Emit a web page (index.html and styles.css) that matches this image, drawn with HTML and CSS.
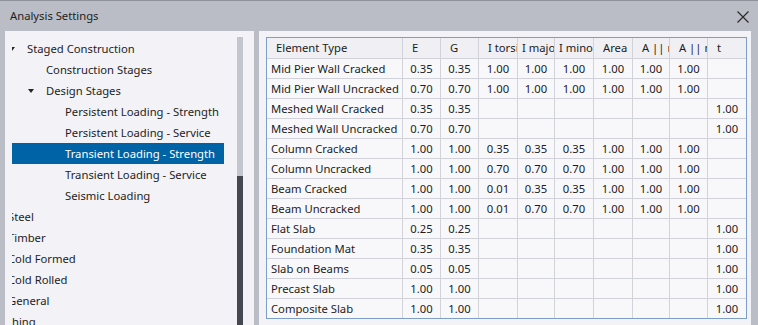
FILE: index.html
```html
<!DOCTYPE html>
<html>
<head>
<meta charset="utf-8">
<link rel="stylesheet" href="styles.css">
</head>
<body>
<div class="window">
  <div class="titlebar">
    <span class="title">Analysis Settings</span>
    <svg class="close" width="12" height="12" viewBox="0 0 12 12"><path d="M0.5 0.5 L11.5 11.5 M11.5 0.5 L0.5 11.5" stroke="#2b2b2b" stroke-width="1.2" fill="none"/></svg>
  </div>
  <div class="content">
    <div class="left">
      <div class="tree-viewport">
        <div class="tree">
          <div class="node l1"><svg class="arrow" width="6" height="4" viewBox="0 0 6 4"><path d="M0 0 H6 L3 4 Z" fill="#262626"/></svg>Staged Construction</div>
          <div class="node l2">Construction Stages</div>
          <div class="node l2"><svg class="arrow" width="6" height="4" viewBox="0 0 6 4"><path d="M0 0 H6 L3 4 Z" fill="#262626"/></svg>Design Stages</div>
          <div class="node l3">Persistent Loading - Strength</div>
          <div class="node l3">Persistent Loading - Service</div>
          <div class="node l3 selected">Transient Loading - Strength</div>
          <div class="node l3">Transient Loading - Service</div>
          <div class="node l3">Seismic Loading</div>
          <div class="node l0">Steel</div>
          <div class="node l0">Timber</div>
          <div class="node l0">Cold Formed</div>
          <div class="node l0">Cold Rolled</div>
          <div class="node l0">General</div>
          <div class="node l0 tail">hing</div>
        </div>
      </div>
      <div class="scrollbar"><div class="track"></div><div class="thumb"></div></div>
    </div>
    <div class="right">
      <div class="grid">
        <div class="row head">
          <div class="c">Element Type</div><div class="c">E</div><div class="c">G</div><div class="c">I torsion</div><div class="c tight">I major</div><div class="c tight">I minor</div><div class="c">Area</div><div class="c">A || minor</div><div class="c">A || major</div><div class="c">t</div>
        </div>
        <div class="row"><div class="c name">Mid Pier Wall Cracked</div><div class="c">0.35</div><div class="c">0.35</div><div class="c">1.00</div><div class="c">1.00</div><div class="c">1.00</div><div class="c">1.00</div><div class="c">1.00</div><div class="c">1.00</div><div class="c"></div></div>
        <div class="row"><div class="c name">Mid Pier Wall Uncracked</div><div class="c">0.70</div><div class="c">0.70</div><div class="c">1.00</div><div class="c">1.00</div><div class="c">1.00</div><div class="c">1.00</div><div class="c">1.00</div><div class="c">1.00</div><div class="c"></div></div>
        <div class="row"><div class="c name">Meshed Wall Cracked</div><div class="c">0.35</div><div class="c">0.35</div><div class="c"></div><div class="c"></div><div class="c"></div><div class="c"></div><div class="c"></div><div class="c"></div><div class="c">1.00</div></div>
        <div class="row"><div class="c name">Meshed Wall Uncracked</div><div class="c">0.70</div><div class="c">0.70</div><div class="c"></div><div class="c"></div><div class="c"></div><div class="c"></div><div class="c"></div><div class="c"></div><div class="c">1.00</div></div>
        <div class="row"><div class="c name">Column Cracked</div><div class="c">1.00</div><div class="c">1.00</div><div class="c">0.35</div><div class="c">0.35</div><div class="c">0.35</div><div class="c">1.00</div><div class="c">1.00</div><div class="c">1.00</div><div class="c"></div></div>
        <div class="row"><div class="c name">Column Uncracked</div><div class="c">1.00</div><div class="c">1.00</div><div class="c">0.70</div><div class="c">0.70</div><div class="c">0.70</div><div class="c">1.00</div><div class="c">1.00</div><div class="c">1.00</div><div class="c"></div></div>
        <div class="row"><div class="c name">Beam Cracked</div><div class="c">1.00</div><div class="c">1.00</div><div class="c">0.01</div><div class="c">0.35</div><div class="c">0.35</div><div class="c">1.00</div><div class="c">1.00</div><div class="c">1.00</div><div class="c"></div></div>
        <div class="row"><div class="c name">Beam Uncracked</div><div class="c">1.00</div><div class="c">1.00</div><div class="c">0.01</div><div class="c">0.70</div><div class="c">0.70</div><div class="c">1.00</div><div class="c">1.00</div><div class="c">1.00</div><div class="c"></div></div>
        <div class="row"><div class="c name">Flat Slab</div><div class="c">0.25</div><div class="c">0.25</div><div class="c"></div><div class="c"></div><div class="c"></div><div class="c"></div><div class="c"></div><div class="c"></div><div class="c">1.00</div></div>
        <div class="row"><div class="c name">Foundation Mat</div><div class="c">0.35</div><div class="c">0.35</div><div class="c"></div><div class="c"></div><div class="c"></div><div class="c"></div><div class="c"></div><div class="c"></div><div class="c">1.00</div></div>
        <div class="row"><div class="c name">Slab on Beams</div><div class="c">0.05</div><div class="c">0.05</div><div class="c"></div><div class="c"></div><div class="c"></div><div class="c"></div><div class="c"></div><div class="c"></div><div class="c">1.00</div></div>
        <div class="row"><div class="c name">Precast Slab</div><div class="c">1.00</div><div class="c">1.00</div><div class="c"></div><div class="c"></div><div class="c"></div><div class="c"></div><div class="c"></div><div class="c"></div><div class="c">1.00</div></div>
        <div class="row last"><div class="c name">Composite Slab</div><div class="c">1.00</div><div class="c">1.00</div><div class="c"></div><div class="c"></div><div class="c"></div><div class="c"></div><div class="c"></div><div class="c"></div><div class="c">1.00</div></div>
      </div>
    </div>
  </div>
</div>
</body>
</html>
```

FILE: styles.css
```css
html, body {
  margin: 0;
  padding: 0;
}
body {
  width: 758px;
  height: 325px;
  overflow: hidden;
  font-family: "Noto Sans", "Open Sans", sans-serif;
  font-size: 11.25px;
  color: #1c1c1c;
}
.window {
  width: 758px;
  height: 325px;
  background: #babdc5;
  display: flex;
  flex-direction: column;
  box-sizing: border-box;
  border-top: 1px solid #8e9199;
}
.titlebar {
  height: 30px;
  flex: none;
  display: flex;
  align-items: center;
  justify-content: space-between;
  padding: 0 9px 0 10px;
  box-sizing: border-box;
}
.title {
  font-size: 11.25px;
  color: #1e1e1e;
  margin-top: -1px;
}
.close {
  display: block;
  margin-top: 1px;
}
.content {
  flex: 1;
  display: flex;
  gap: 5px;
  padding: 0 7px 0 5px;
  min-height: 0;
}
.left {
  width: 249px;
  flex: none;
  background: #f2f2f7;
  display: flex;
  padding-left: 7px;
  box-sizing: border-box;
  overflow: hidden;
}
.tree-viewport {
  width: 212px;
  flex: none;
  margin-top: 7px;
  overflow: hidden;
}
.tree {
  margin-left: -4px;
  width: 216px;
}
.node {
  height: 21px;
  line-height: 21px;
  white-space: nowrap;
  position: relative;
  color: #1e1e1e;
}
.node.l0 { padding-left: 0; }
.node.l1 { padding-left: 19px; }
.node.l2 { padding-left: 38px; }
.node.l3 { padding-left: 57px; }
.node.tail { padding-left: 4px; }
.node.selected {
  background: #0063a6;
  color: #ffffff;
}
.arrow {
  position: absolute;
  top: 9px;
}
.node.l1 .arrow { left: 1px; }
.node.l2 .arrow { left: 20px; }
.scrollbar {
  width: 6px;
  flex: none;
  margin-left: 13px;
  margin-top: 6px;
  display: flex;
  flex-direction: column;
}
.track {
  height: 139px;
  background: #c4c6cd;
  flex: none;
}
.thumb {
  flex: 1;
  background: #45494f;
}
.right {
  width: 492px;
  flex: none;
  background: #f2f2f7;
  padding: 6px 0 0 7px;
  box-sizing: border-box;
}
.grid {
  width: 481px;
  border: 1px solid #7d9ec7;
  box-sizing: border-box;
  background: #f8f8fb;
}
.row {
  display: grid;
  grid-template-columns: 136px 38px 38px 39px 37px 39px 39px 37px 38px 38px;
  height: 20px;
  box-sizing: border-box;
  border-bottom: 1px solid #d2d3da;
}
.row.head {
  height: 21px;
  background: #efeff4;
}
.row.last {
  border-bottom: none;
  height: 19px;
}
.c {
  box-sizing: border-box;
  border-right: 1px solid #d2d3da;
  white-space: nowrap;
  overflow: hidden;
  text-align: center;
  line-height: 19px;
  color: #1c1c1c;
}
.row .c:last-child {
  border-right: none;
}
.row.head .c {
  text-align: left;
  padding-left: 9px;
  line-height: 20px;
}
.row.head .c.tight {
  padding-left: 4px;
}
.c.name {
  text-align: left;
  padding-left: 4px;
}
```
